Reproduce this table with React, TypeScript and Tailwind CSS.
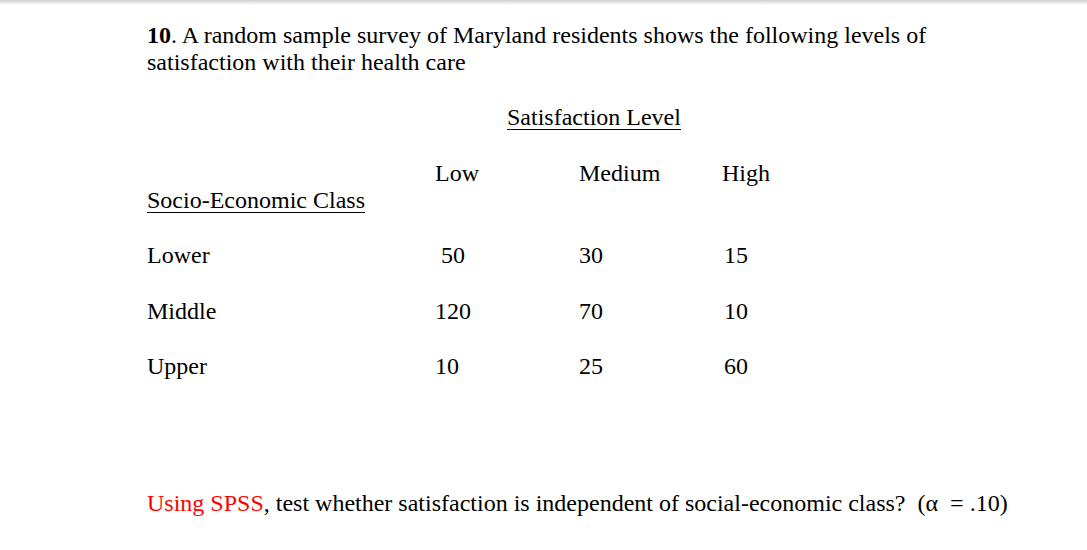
export default function App() {
  const rows = [
    { label: 'Lower', low: ' 50', medium: '30', high: '15', top: 'mt-[28px]' },
    { label: 'Middle', low: '120', medium: '70', high: '10', top: 'mt-[29px]' },
    { label: 'Upper', low: '10', medium: '25', high: '60', top: 'mt-[28px]' },
  ]

  return (
    <div className="min-h-[550px] w-[1087px] bg-white text-black font-['Liberation_Serif','Times_New_Roman',serif] text-[24px] leading-[27px]">
      {/* page edge shadow */}
      <div className="h-[5px] bg-gradient-to-b from-[#cfcfcf] to-white" />

      <div className="pl-[147px] pt-[17px]">
        {/* Question */}
        <p>
          <span className="font-bold">10</span>. A random sample survey of Maryland residents shows the following levels of
          <br />
          satisfaction with their health care
        </p>

        {/* Table heading */}
        <div className="mt-[28px] pl-[360px]">
          <span className="underline underline-offset-[4px] decoration-1">Satisfaction Level</span>
        </div>

        <div className="mt-[29px] grid grid-cols-[288px_144px_143px_auto]">
          <span />
          <span>Low</span>
          <span>Medium</span>
          <span>High</span>
        </div>

        <div>
          <span className="underline underline-offset-[4px] decoration-1">Socio-Economic Class</span>
        </div>

        {rows.map(r => (
          <div key={r.label} className={`${r.top} grid grid-cols-[288px_144px_143px_auto]`}>
            <span>{r.label}</span>
            <span className="whitespace-pre">{r.low}</span>
            <span>{r.medium}</span>
            <span className="pl-[2px]">{r.high}</span>
          </div>
        ))}

        {/* Instruction */}
        <p className="mt-[110px] whitespace-pre">
          <span className="text-[#ff0000]">Using SPSS</span>, test whether satisfaction is independent of social-economic class?  (α  = .10)
        </p>
      </div>
    </div>
  )
}
